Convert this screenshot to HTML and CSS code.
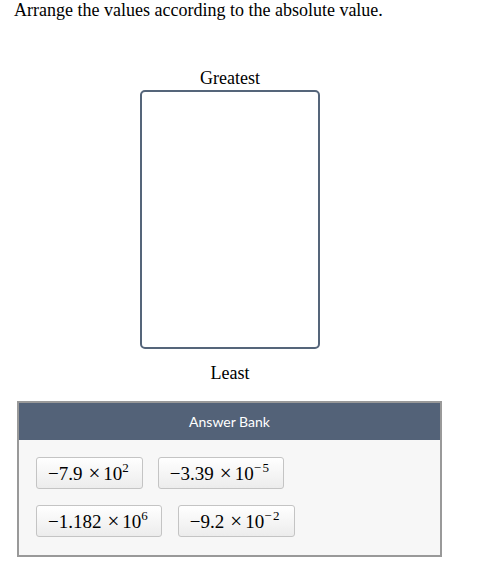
FILE: index.html
```html
<!DOCTYPE html>
<html lang="en">
  <head>
    <meta charset="UTF-8" />
    <title>Ranking by absolute value</title>
    <link rel="stylesheet" href="styles.css">
  </head>
  <body>
    <main class="question">
      <p class="prompt">Arrange the values according to the absolute value.</p>

      <section class="ranking">
        <div class="rank-label">Greatest</div>
        <div class="drop-zone" aria-label="Drop values here"></div>
        <div class="rank-label least">Least</div>
      </section>

      <section class="answer-bank">
        <header class="bank-title">Answer Bank</header>
        <div class="bank-items">
          <div class="bank-row">
            <button class="chip">&minus;7.9<span class="times">&times;</span>10<sup>2</sup></button>
            <button class="chip">&minus;3.39<span class="times">&times;</span>10<sup class="neg">&minus;5</sup></button>
          </div>
          <div class="bank-row">
            <button class="chip">&minus;1.182<span class="times">&times;</span>10<sup>6</sup></button>
            <button class="chip">&minus;9.2<span class="times">&times;</span>10<sup class="neg">&minus;2</sup></button>
          </div>
        </div>
      </section>
    </main>
  </body>
</html>
```

FILE: styles.css
```css
body {
  margin: 0;
  background: #fff;
  font-family: "Liberation Serif", "Times New Roman", serif;
  color: #000;
}
.question {
  width: 488px;
}
.prompt {
  margin: 0;
  padding: 0 0 0 14px;
  font-size: 18px;
  line-height: 20px;
}
.ranking {
  display: flex;
  flex-direction: column;
  align-items: center;
  margin-top: 48px;
  width: 460px;
}
.rank-label {
  font-size: 18px;
  line-height: 20px;
}
.drop-zone {
  width: 176px;
  height: 255px;
  margin: 2px 0 14px;
  border: 2px solid #55657a;
  border-radius: 5px;
}
.answer-bank {
  margin: 18px 0 0 17px;
  width: 421px;
  border: 2px solid #999;
  background: #f7f7f7;
}
.bank-title {
  background: #536278;
  color: #fff;
  font-family: Lato, "Open Sans", sans-serif;
  font-size: 14px;
  text-align: center;
  height: 37px;
  line-height: 38px;
}
.bank-items {
  display: flex;
  flex-direction: column;
  gap: 16px;
  padding: 17px 0 18px 17px;
}
.bank-row {
  display: flex;
  gap: 15px;
}
.bank-row + .bank-row {
  gap: 16px;
}
.chip {
  font-family: "Liberation Serif", "Times New Roman", serif;
  font-size: 19px;
  color: #000;
  height: 32px;
  padding: 2px 13px 0 11px;
  border: 1px solid #c4c4c4;
  border-radius: 3px;
  background: linear-gradient(#fff, #ececec);
  cursor: pointer;
}
.times {
  font-size: 21px;
  line-height: 0;
  margin: 0 3px 0 6px;
}
.chip sup {
  font-size: 13px;
  vertical-align: 8px;
  line-height: 0;
}
/* negative exponents get a little room after the minus */
.chip sup.neg {
  letter-spacing: 1.5px;
}
```
